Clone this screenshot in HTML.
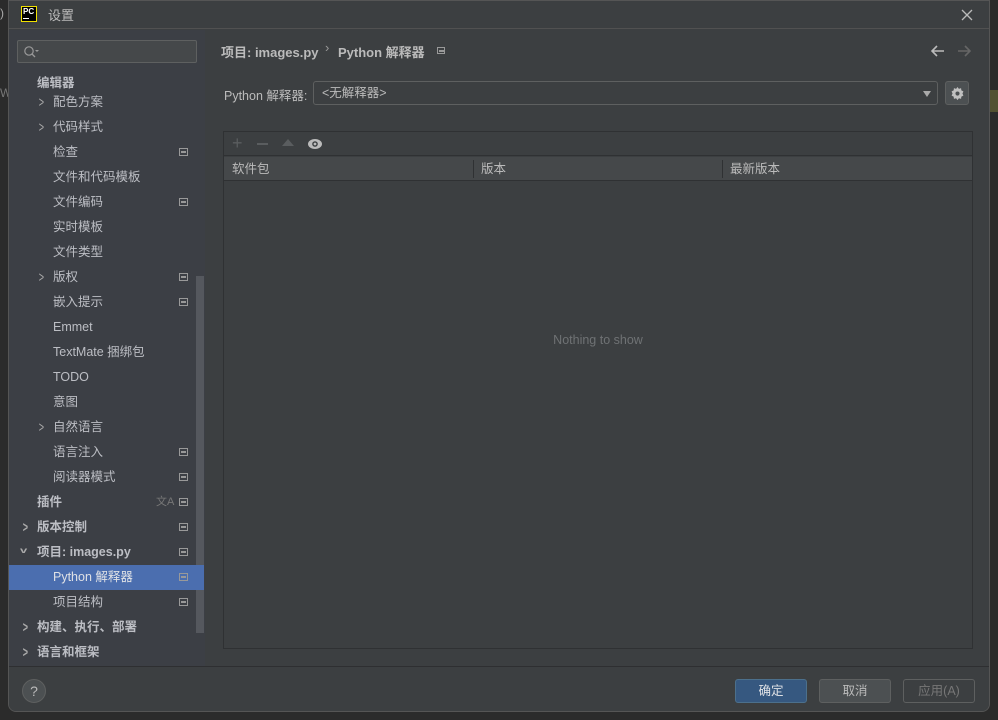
<!DOCTYPE html><html><head><meta charset="utf-8"><style>
*{margin:0;padding:0;box-sizing:border-box}
body{width:998px;height:720px;background:#2b2b2b;font-family:"Liberation Sans","Noto Sans CJK SC",sans-serif;font-size:13px;color:#bbbbbb;position:relative;overflow:hidden}
.dlg{position:absolute;left:8px;top:0;width:982px;height:712px;background:#3c3f41;border:1px solid #555;border-radius:0 0 8px 8px;overflow:hidden}
.title{position:absolute;left:0;top:0;right:0;height:28px;border-bottom:1px solid #515151;background:#3c3f41}
.side{position:absolute;left:0;top:29px;width:196px;height:636px;background:#3c3f45}
.sb{position:absolute;left:187px;top:275px;width:8px;height:357px;background:#55585e}
.row{position:absolute;left:0;width:195px;height:25px;line-height:25px;font-size:12.5px;color:#bcbec4}
.row .ch{position:absolute;font-size:12px;color:#aaa;transform:scaleX(.6)}
.ic{position:absolute;left:170px;top:8px;width:9px;height:8px;border:1px solid #999;}
.ic:after{content:"";position:absolute;left:1px;top:2px;width:5px;height:2px;background:#999}
.sel{background:#4b6eaf;color:#dfe1e5}
.foot{position:absolute;left:0;top:665px;right:0;height:47px;border-top:1px solid #2e2f31;background:#3c3f41}
.btn{position:absolute;top:12px;height:24px;width:72px;border:1px solid #5e6060;border-radius:3px;text-align:center;line-height:22px;font-size:12.5px;background:#4c5052;color:#bbb}
</style></head><body>
<div style="position:absolute;left:0;top:6px;font-size:12px;color:#aaa">)</div>
<div style="position:absolute;left:0;top:86px;font-size:12px;color:#777">W</div>
<div style="position:absolute;left:990px;top:90px;width:8px;height:22px;background:#525131"></div>
<div class="dlg">
<div class="title">
<div style="position:absolute;left:12px;top:5px;width:16px;height:16px;background:#000;border:1px solid #f0e000;color:#fff;font-size:8px;font-weight:bold;line-height:10px;padding-left:1px">PC<div style="width:6px;height:1px;background:#fff;margin-top:1px"></div></div>
<div style="position:absolute;left:39px;top:4px;font-size:13px;color:#bbb">设置</div>
<svg style="position:absolute;left:952px;top:8px" width="12" height="12"><path d="M1 1L11 11M11 1L1 11" stroke="#bbb" stroke-width="1.3"/></svg>
</div>
<div class="side">
<div style="position:absolute;left:8px;top:10px;width:180px;height:23px;border:1px solid #5e6060;border-radius:2px;background:#45484a">
<svg style="position:absolute;left:5px;top:4px" width="16" height="14"><circle cx="6" cy="6" r="4.2" fill="none" stroke="#999" stroke-width="1.2"/><path d="M9 9L12 12" stroke="#999" stroke-width="1.3"/><path d="M12 5h4l-2 2z" fill="#999"/></svg></div>
</div>
<div class="sb"></div>
<div id="rows"></div>
<div style="position:absolute;left:196px;top:29px;width:786px;height:636px;background:#3c3f41">
<div style="position:absolute;left:16px;top:12px;font-weight:bold;font-size:13px;color:#bbb">项目: images.py</div>
<div style="position:absolute;left:120px;top:10px;color:#999;font-size:13px">›</div>
<div style="position:absolute;left:133px;top:12px;font-weight:bold;font-size:13px;color:#bbb">Python 解释器</div>
<div class="ic" style="left:232px;top:17px;width:8px;height:7px"></div>
<svg style="position:absolute;left:726px;top:15px" width="14" height="12"><path d="M13 6H2M6 1L1 6L6 11" stroke="#bbb" stroke-width="1.6" fill="none"/></svg>
<svg style="position:absolute;left:752px;top:15px" width="14" height="12"><path d="M1 6H12M8 1L13 6L8 11" stroke="#666" stroke-width="1.6" fill="none"/></svg>
<div style="position:absolute;left:19px;top:55px;font-size:12.5px;color:#bbb">Python 解释器:</div>
<div style="position:absolute;left:108px;top:51px;width:625px;height:24px;border:1px solid #5e6060;border-radius:3px;background:#3c3f41;line-height:22px;padding-left:8px;font-size:12.5px;color:#bbb">&lt;无解释器&gt;<span style="position:absolute;right:6px;top:9px;border:4px solid transparent;border-top:6px solid #aaa;border-bottom:0"></span></div>
<div style="position:absolute;left:740px;top:51px;width:24px;height:24px;border:1px solid #5e6060;border-radius:3px;background:#4c5052">
<svg style="position:absolute;left:4px;top:4px" width="15" height="15" viewBox="0 0 16 16"><path d="M8 1l1.5 2 2.3-.7.3 2.4 2.2 1-1 2.3 1 2.3-2.2 1-.3 2.4-2.3-.7L8 15l-1.5-2-2.3.7-.3-2.4-2.2-1 1-2.3-1-2.3 2.2-1 .3-2.4 2.3.7z" fill="#c0c0c0"/><circle cx="8" cy="8" r="2.2" fill="#4c5052"/></svg></div>
<div style="position:absolute;left:18px;top:101px;width:750px;height:518px;border:1px solid #2f3133;background:#3c3f41">
<div style="position:absolute;left:0;top:0;right:0;height:24px;border-bottom:1px solid #2f3133">
<span style="position:absolute;left:8px;top:0;font-size:18px;color:#5a5d5f;line-height:22px">+</span>
<span style="position:absolute;left:33px;top:11px;width:11px;height:2px;background:#5a5d5f"></span>
<span style="position:absolute;left:58px;top:7px;border:6px solid transparent;border-bottom:7px solid #5a5d5f;border-top:0"></span>
<svg style="position:absolute;left:83px;top:6px" width="16" height="12"><ellipse cx="8" cy="6" rx="7" ry="5" fill="#bbb"/><circle cx="8" cy="6" r="2.8" fill="#3c3f41"/><circle cx="8" cy="6" r="1.4" fill="#bbb"/></svg>
</div>
<div style="position:absolute;left:0;top:25px;right:0;height:24px;background:#45484a;border-bottom:1px solid #2f3133;font-size:12.5px;line-height:24px;color:#bbb">
<span style="position:absolute;left:8px">软件包</span><span style="position:absolute;left:249px;top:3px;width:1px;height:18px;background:#2f3133"></span>
<span style="position:absolute;left:257px">版本</span><span style="position:absolute;left:498px;top:3px;width:1px;height:18px;background:#2f3133"></span>
<span style="position:absolute;left:506px">最新版本</span></div>
<div style="position:absolute;left:0;right:0;top:201px;text-align:center;color:#6f7274;font-size:12.5px">Nothing to show</div>
</div>
</div>
<div class="foot">
<div style="position:absolute;left:13px;top:12px;width:24px;height:24px;border-radius:50%;background:#4c5052;border:1px solid #5e6060;text-align:center;line-height:22px;color:#bbb;font-size:14px">?</div>
<div class="btn" style="left:726px;background:#365880;border-color:#4c708c;color:#dfe1e5">确定</div>
<div class="btn" style="left:810px">取消</div>
<div class="btn" style="left:894px;background:#3c3f41;color:#777">应用(A)</div>
</div>
</div>
<script>
var items=[["编辑器",0,0,0,82,1],["配色方案",1,1,0],["代码样式",1,1,0],["检查",1,0,1],["文件和代码模板",1,0,0],["文件编码",1,0,1],["实时模板",1,0,0],["文件类型",1,0,0],["版权",1,1,1],["嵌入提示",1,0,1],["Emmet",1,0,0],["TextMate 捆绑包",1,0,0],["TODO",1,0,0],["意图",1,0,0],["自然语言",1,1,0],["语言注入",1,0,1],["阅读器模式",1,0,1],["插件",0,0,1,0,1],["版本控制",0,1,1,0,1],["项目: images.py",0,2,1,0,1],["Python 解释器",1,0,1,0,0,1],["项目结构",1,0,1],["构建、执行、部署",0,1,0,0,1],["语言和框架",0,1,0,0,1]];
var h="";items.forEach(function(it,i){var cy=i==0?82:101+25*(i-1);var top=cy-12.5;var x=it[1]?43:27;
h+='<div class="row'+(it[6]?' sel':'')+'" style="top:'+top+'px;'+(it[5]?'font-weight:bold;':'')+'">';
if(it[2]==1)h+='<span class="ch" style="left:'+(x-15)+'px;font-size:15px">&gt;</span>';
if(it[2]==2)h+='<span class="ch" style="left:'+(x-16)+'px;top:-2px;font-size:13px;transform:scaleY(.6)">v</span>';
h+='<span style="position:absolute;left:'+(i==0?28:x+1)+'px">'+it[0]+'</span>';
if(it[3])h+='<span class="ic"></span>';
if(i==17)h+='<span style="position:absolute;left:147px;font-size:11px;color:#777;font-weight:normal">文A</span>';
h+='</div>';});
document.getElementById("rows").innerHTML=h;
</script>
</body></html>
